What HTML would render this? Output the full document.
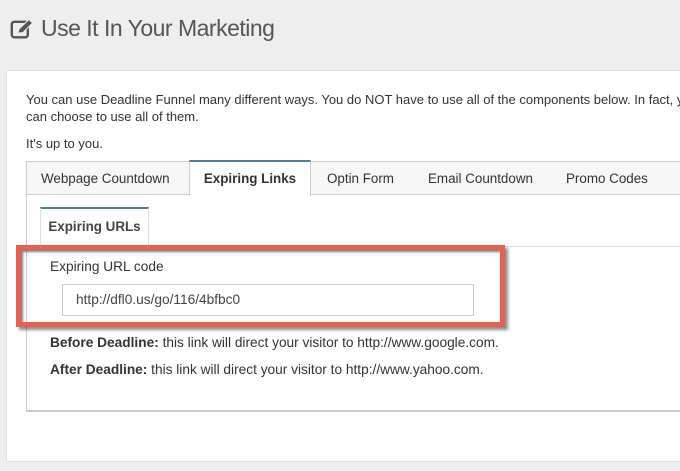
<!DOCTYPE html>
<html><head><style>
*{box-sizing:border-box;margin:0;padding:0}
body{width:680px;height:471px;background:#eeeeee;font-family:"Liberation Sans",sans-serif;color:#333;position:relative;overflow:hidden;font-size:13px}
.abs{position:absolute}
h1{position:absolute;left:41px;top:15px;font-size:23px;font-weight:normal;color:#555;letter-spacing:-0.5px;white-space:nowrap}
.panel{left:6px;top:70px;width:680px;height:392px;background:#fff;border:1px solid #e2e2e2}
.t{white-space:nowrap;font-size:13px;color:#333}
.tabbar{left:26px;top:161px;width:660px;height:34px;background:#f7f7f7;border:1px solid #ccc}
.tab{top:0;height:33px;line-height:33px;font-size:13.4px;white-space:nowrap;color:#333}
.active{left:162px;top:-2px;width:122px;height:36px;background:#fff;border-top:2px solid #4a7f9f;border-left:1px solid #ccc;border-right:1px solid #ccc;font-weight:bold;text-align:center;line-height:34px}
.content{left:26px;top:194px;width:660px;height:218px;border-left:1px solid #ccc;border-bottom:2px solid #ccc}
.b{font-size:13.7px}
</style></head><body>
<svg class="abs" style="left:10px;top:18px" width="26" height="22" viewBox="0 0 26 22">
<rect x="1.8" y="3.8" width="16" height="15.5" rx="2.5" fill="none" stroke="#555" stroke-width="2.4"/>
<path d="M8 15 L9 11 L19 1.5 L22.5 5 L13 14.5 Z" fill="#555" stroke="#eee" stroke-width="1"/>
</svg>
<h1>Use It In Your Marketing</h1>
<div class="abs panel"></div>
<div class="abs t" style="left:26px;top:92px">You can use Deadline Funnel many different ways. You do NOT have to use all of the components below. In fact, you</div>
<div class="abs t" style="left:26px;top:109px">can choose to use all of them.</div>
<div class="abs t" style="left:26px;top:136px">It's up to you.</div>
<div class="abs tabbar">
<div class="abs tab" style="left:14px">Webpage Countdown</div>
<div class="abs tab active">Expiring Links</div>
<div class="abs tab" style="left:300px">Optin Form</div>
<div class="abs tab" style="left:401px">Email Countdown</div>
<div class="abs tab" style="left:539px">Promo Codes</div>
</div>
<div class="abs content"></div>
<div class="abs" style="left:149px;top:246px;width:540px;height:1px;background:#ddd"></div>
<div class="abs" style="left:40px;top:207px;width:109px;height:40px;background:#fff;border:1px solid #ddd;border-top:2px solid #4a7f9f;border-bottom:none;font-weight:bold;text-align:center;line-height:36px;color:#444;font-size:13.4px">Expiring URLs</div>
<div class="abs" style="left:16px;top:245px;width:489px;height:82px;border:5px solid #e8604f;box-shadow:3px 3px 3px rgba(0,0,0,.45), inset 2px 2px 2px rgba(0,0,0,.5)"></div>
<div class="abs t b" style="left:50px;top:259px;color:#333">Expiring URL code</div>
<div class="abs b" style="left:62px;top:284px;width:412px;height:32px;border:1px solid #ccc;background:#fff;padding-left:13px;line-height:30px;color:#444">http://dfl0.us/go/116/4bfbc0</div>
<div class="abs t b" style="left:50px;top:335px"><b>Before Deadline:</b> this link will direct your visitor to http://www.google.com.</div>
<div class="abs t b" style="left:50px;top:362px"><b>After Deadline:</b> this link will direct your visitor to http://www.yahoo.com.</div>
</body></html>
